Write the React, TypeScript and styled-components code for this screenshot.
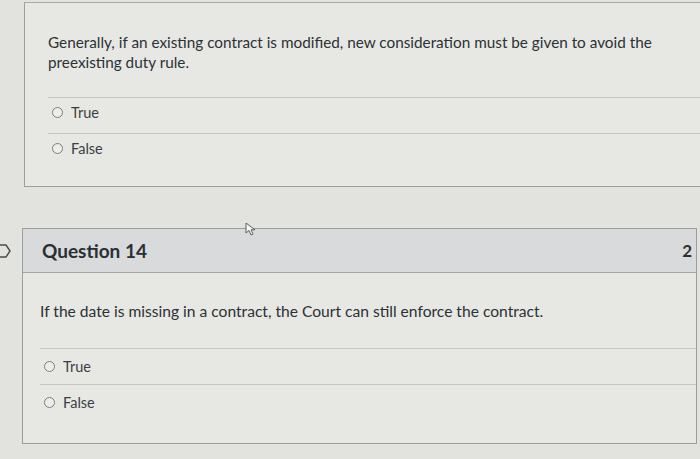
import React from "react";
import styled, { createGlobalStyle } from "styled-components";

const GlobalStyle = createGlobalStyle`
  html, body {
    margin: 0;
    padding: 0;
    background: #e2e3de;
    overflow: hidden;
  }
  body {
    font-family: Lato, "Open Sans", sans-serif;
    color: #2f3437;
  }
`;

const Page = styled.div`
  position: relative;
  width: 700px;
  height: 459px;
  overflow: hidden;
  padding-top: 2px;
  box-sizing: border-box;
`;

const Card = styled.section<{ $left: number; $openRight?: boolean }>`
  margin-left: ${(p) => p.$left}px;
  margin-right: ${(p) => (p.$openRight ? -10 : 3)}px;
  border: 1px solid #9c9e9c;
  background: #e7e8e3;
`;

const Header = styled.div`
  display: flex;
  align-items: center;
  justify-content: space-between;
  height: 43px;
  padding: 0 4px 0 19px;
  background: #d8dadc;
  border-bottom: 1px solid #a4a6a6;
`;

const Title = styled.h2`
  margin: 0;
  font-size: 19px;
  font-weight: 700;
  color: #2b2f33;
`;

const Points = styled.span`
  font-size: 17px;
  font-weight: 700;
  color: #2b2f33;
`;

const Body = styled.div<{ $padLeft: number; $padTop: number; $height: number }>`
  padding: ${(p) => p.$padTop}px 0 0 ${(p) => p.$padLeft}px;
  height: ${(p) => p.$height}px;
  box-sizing: border-box;
`;

const Text = styled.p<{ $gap: number; $size: number }>`
  margin: 0 0 ${(p) => p.$gap}px;
  font-size: ${(p) => p.$size}px;
  line-height: 20px;
  color: #2c3135;
  max-width: 640px;
`;

const Answers = styled.ul`
  list-style: none;
  margin: 0;
  padding: 0;
`;

const Answer = styled.li<{ $offset: number }>`
  display: flex;
  align-items: center;
  gap: 8px;
  height: 36px;
  padding: 0 0 ${(p) => p.$offset}px 4px;
  box-sizing: border-box;
  border-top: 1px solid #c4c6c4;
  font-size: 14.5px;
  color: #3a3f46;
`;

const Radio = styled.span`
  width: 9px;
  height: 9px;
  border: 1.5px solid #7b7e80;
  border-radius: 50%;
  background: #eceeea;
`;

const Gap = styled.div`
  height: 41px;
`;

const Flag = styled.svg`
  position: absolute;
  left: -6px;
  top: 244px;
`;

const Cursor = styled.svg`
  position: absolute;
  left: 245px;
  top: 222px;
`;

const options = ["True", "False"];

export default function App() {
  return (
    <Page>
      <GlobalStyle />
      <Card $left={24} $openRight style={{ borderTopColor: "#a8aaa9" }}>
        <Body $padLeft={23} $padTop={29} $height={183}>
          <Text $gap={25} $size={15.3}>
            Generally, if an existing contract is modified, new consideration must be given to avoid the
            preexisting duty rule.
          </Text>
          <Answers>
            {options.map((o) => (
              <Answer key={o} $offset={6}>
                <Radio />
                {o}
              </Answer>
            ))}
          </Answers>
        </Body>
      </Card>
      <Gap />
      <Card $left={22}>
        <Header>
          <Title>Question 14</Title>
          <Points>2</Points>
        </Header>
        <Body $padLeft={17} $padTop={28} $height={170}>
          <Text $gap={27} $size={15.6}>
            If the date is missing in a contract, the Court can still enforce the contract.
          </Text>
          <Answers>
            {options.map((o) => (
              <Answer key={o} $offset={1}>
                <Radio />
                {o}
              </Answer>
            ))}
          </Answers>
        </Body>
      </Card>
      <Flag width="18" height="14" viewBox="0 0 18 14">
        <path d="M1 1 H12 L16 7 L12 13 H1" fill="none" stroke="#4a4d50" strokeWidth="1.4" strokeLinejoin="round" />
      </Flag>
      <Cursor width="14" height="14" viewBox="0 0 14 14">
        <path d="M1 1 L1 11 L4 8.5 L6 13 L8 12 L6 7.8 L10 7.8 Z" fill="#f6f7f5" stroke="#5a5d60" strokeWidth="1" strokeLinejoin="round" />
      </Cursor>
    </Page>
  );
}
